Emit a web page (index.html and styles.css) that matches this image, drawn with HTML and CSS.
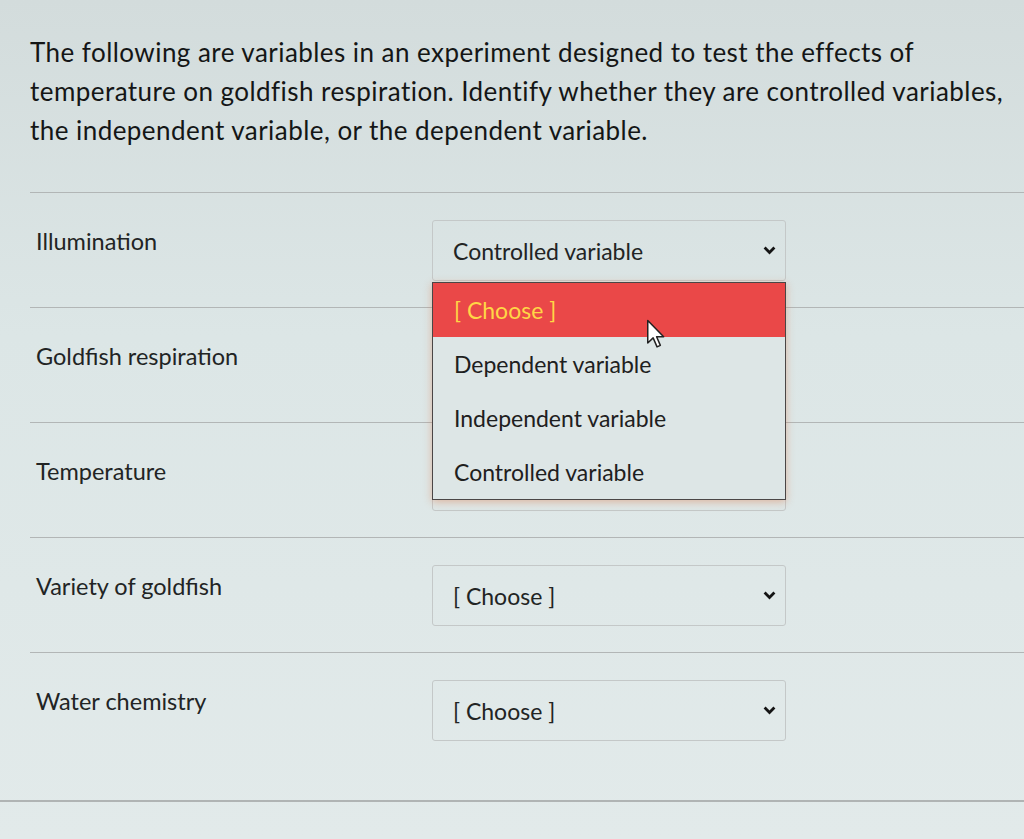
FILE: index.html
```html
<!DOCTYPE html>
<html lang="en">
<head>
    <meta charset="UTF-8">
    <meta name="viewport" content="width=device-width, initial-scale=1.0">
    <title>Matching question</title>
    <link rel="stylesheet" href="styles.css">
</head>
<body>
    <div class="quiz">
        <p class="question">The following are variables in an experiment designed to test the effects of temperature on goldfish respiration. Identify whether they are controlled variables, the independent variable, or the dependent variable.</p>

        <div class="answers">
            <div class="row">
                <div class="label">Illumination</div>
                <div class="select-wrap">
                    <div class="select">
                        <span>Controlled variable</span>
                        <svg class="chevron" width="13" height="9" viewBox="0 0 13 9"><path d="M1.6 1.6 L6.5 6.5 L11.4 1.6" fill="none" stroke="#141414" stroke-width="2.8"/></svg>
                    </div>
                    <ul class="menu">
                        <li class="active">[ Choose ]</li>
                        <li>Dependent variable</li>
                        <li>Independent variable</li>
                        <li>Controlled variable</li>
                        <svg class="cursor" width="20" height="30" viewBox="0 0 13 20"><path d="M1 1 L1 16 L4.6 12.6 L7.2 18.6 L9.4 17.6 L6.9 11.8 L11.6 11.8 Z" fill="#fff" stroke="#222" stroke-width="1" stroke-linejoin="round"/></svg>
                    </ul>
                </div>
            </div>

            <!-- these two selects sit under the open menu -->
            <div class="row">
                <div class="label">Goldfish respiration</div>
                <div class="select-wrap">
                    <div class="select"></div>
                </div>
            </div>

            <div class="row">
                <div class="label">Temperature</div>
                <div class="select-wrap">
                    <div class="select"></div>
                </div>
            </div>

            <div class="row">
                <div class="label">Variety of goldfish</div>
                <div class="select-wrap">
                    <div class="select">
                        <span>[ Choose ]</span>
                        <svg class="chevron" width="13" height="9" viewBox="0 0 13 9"><path d="M1.6 1.6 L6.5 6.5 L11.4 1.6" fill="none" stroke="#141414" stroke-width="2.8"/></svg>
                    </div>
                </div>
            </div>

            <div class="row last">
                <div class="label">Water chemistry</div>
                <div class="select-wrap">
                    <div class="select">
                        <span>[ Choose ]</span>
                        <svg class="chevron" width="13" height="9" viewBox="0 0 13 9"><path d="M1.6 1.6 L6.5 6.5 L11.4 1.6" fill="none" stroke="#141414" stroke-width="2.8"/></svg>
                    </div>
                </div>
            </div>
        </div>
    </div>
    <div class="footer-line"></div>
</body>
</html>
```

FILE: styles.css
```css
body {
    margin: 0;
    font-family: Lato, "Open Sans", sans-serif;
    color: #1e2020;
    background: linear-gradient(180deg, #d3dcdc 0%, #dce6e6 40%, #e2eaea 100%);
    min-height: 839px;
}

.quiz {
    padding-left: 30px;
}

.question {
    margin: 0;
    padding: 33px 0 0 0;
    font-size: 26px;
    letter-spacing: 0.45px;
    line-height: 39px;
    max-width: 975px;
    height: 192px;
    box-sizing: border-box;
    color: #141616;
}

.row {
    display: grid;
    grid-template-columns: 402px 354px;
    align-items: start;
    height: 115px;
    border-top: 1px solid #b2b6b6;
    box-sizing: border-box;
}

.row.last {
    height: 148px;
}

.label {
    padding: 34px 0 0 6px;
    font-size: 23.5px;
    line-height: 28px;
    color: #222424;
}

.select-wrap {
    position: relative;
    margin-top: 27px;
}

.select {
    display: flex;
    align-items: center;
    justify-content: space-between;
    height: 61px;
    padding: 0 9px 0 20px;
    border: 1px solid #c4c8c8;
    border-radius: 3px;
    box-sizing: border-box;
    font-size: 23px;
    color: #222424;
}

.menu {
    position: absolute;
    top: 62px;
    left: 0;
    right: 0;
    margin: 0;
    padding: 0;
    list-style: none;
    background: #dde6e6;
    border: 1px solid #4a4646;
    box-shadow: 0 2px 8px rgba(220, 120, 70, 0.45);
    z-index: 2;
}

.menu li {
    height: 54px;
    line-height: 54px;
    padding-left: 21px;
    font-size: 23px;
    color: #1e2020;
}

.menu li.active {
    background: #ea4848;
    color: #ffd646;
}

.cursor {
    position: absolute;
    left: 213px;
    top: 36px;
}

.footer-line {
    border-top: 2px solid #b0b4b4;
}
```
